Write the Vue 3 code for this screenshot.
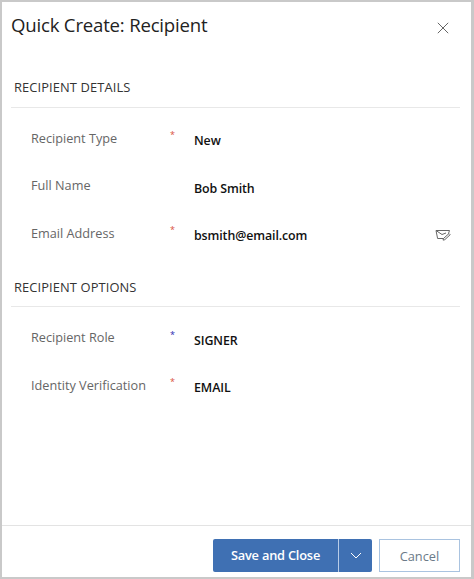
<template>
  <div class="dialog">
    <header class="dialog__header">
      <h1 class="dialog__title">Quick Create: Recipient</h1>
      <button class="dialog__close" type="button" aria-label="Close">
        <svg width="12" height="12" viewBox="0 0 12 12">
          <path d="M.8.8l10.4 10.4M11.2.8L.8 11.2" fill="none" stroke="#666" stroke-width="1" />
        </svg>
      </button>
    </header>

    <main class="dialog__body">
      <section v-for="section in sections" :key="section.title" class="section">
        <h2 class="section__title">{{ section.title }}</h2>
        <div v-for="field in section.fields" :key="field.label" class="field">
          <span class="field__label">{{ field.label }}</span>
          <span class="field__mark" :class="`field__mark--${field.mark}`">{{ field.mark ? '*' : '' }}</span>
          <span class="field__value">{{ field.value }}</span>
          <svg v-if="field.mailIcon" class="field__icon" width="16" height="12" viewBox="0 0 16 12">
            <path
              d="M1 1.5h13.5l-1 3M1 1.5l1.6 8h6M1 1.5l6 4 4-1.5M8.5 9.5l5.5-5 1.2 1.2-5.4 5-1.8.4z"
              fill="none"
              stroke="#666"
              stroke-width="1"
            />
          </svg>
        </div>
      </section>
    </main>

    <footer class="dialog__footer">
      <div class="split">
        <button class="split__main" type="button">Save and Close</button>
        <button class="split__toggle" type="button" aria-label="More">
          <svg width="12" height="7" viewBox="0 0 12 7">
            <path d="M1 1l5 5 5-5" fill="none" stroke="#fff" stroke-width="1" />
          </svg>
        </button>
      </div>
      <button class="cancel" type="button">Cancel</button>
    </footer>
  </div>
</template>

<script setup>
const sections = [
  {
    title: 'RECIPIENT DETAILS',
    fields: [
      { label: 'Recipient Type', mark: 'red', value: 'New' },
      { label: 'Full Name', mark: '', value: 'Bob Smith' },
      { label: 'Email Address', mark: 'red', value: 'bsmith@email.com', mailIcon: true },
    ],
  },
  {
    title: 'RECIPIENT OPTIONS',
    fields: [
      { label: 'Recipient Role', mark: 'blue', value: 'SIGNER' },
      { label: 'Identity Verification', mark: 'red', value: 'EMAIL' },
    ],
  },
]
</script>

<style>
html,
body {
  margin: 0;
  background: #fff;
}
</style>

<style scoped>
.dialog {
  box-sizing: border-box;
  width: 474px;
  height: 579px;
  display: flex;
  flex-direction: column;
  background: #fff;
  border: 2px solid #c9c9c9;
  border-right-width: 3px;
  font-family: "Open Sans", "Noto Sans", sans-serif;
  color: #222;
}

.dialog__header {
  display: flex;
  justify-content: space-between;
  align-items: center;
  height: 50px;
  padding: 0 22px 0 9px;
}

.dialog__title {
  margin: -6px 0 0;
  font-size: 18.6px;
  font-weight: 400;
  letter-spacing: -0.2px;
  color: #222;
}

.dialog__close {
  display: flex;
  margin-top: 2px;
  padding: 0;
  border: 0;
  background: none;
}

.dialog__body {
  flex: 1;
  padding: 21px 11px 0 9px;
}

.section__title {
  box-sizing: border-box;
  height: 35px;
  margin: 0 0 6px;
  padding: 5px 0 0 3px;
  border-bottom: 1px solid #e8e8e8;
  font-size: 12.9px;
  font-weight: 400;
  line-height: 18px;
  letter-spacing: 0.1px;
  color: #333;
}

.section {
  margin-bottom: 15px;
}

.section + .section .section__title {
  margin-bottom: 7px;
  padding-top: 6px;
}

.field {
  display: grid;
  grid-template-columns: 139px 24px 1fr 25px;
  align-items: start;
  height: 47.5px;
  padding-left: 20px;
  box-sizing: border-box;
}

.field__label {
  padding-top: 14.5px;
  font-size: 12.7px;
  line-height: 18px;
  color: #666;
}

.field__mark {
  padding-top: 14px;
  font-size: 9px;
  line-height: 14px;
}

.field__mark--red { color: #d9513c; }
.field__mark--blue { color: #2a2ab0; }

.field__value {
  padding-top: 18px;
  font-size: 12.4px;
  font-weight: 600;
  line-height: 18px;
  letter-spacing: -0.1px;
  color: #111;
}

.field__icon {
  margin-top: 20px;
}

.dialog__footer {
  display: flex;
  justify-content: flex-end;
  gap: 7px;
  height: 52px;
  padding: 13px 11px 0 0;
  box-sizing: border-box;
  border-top: 1px solid #e3e3e3;
}

.split {
  display: flex;
  height: 33px;
  border-radius: 2px;
  overflow: hidden;
}

.split__main,
.split__toggle {
  height: 33px;
  padding: 0;
  border: 0;
  background: #3f70b3;
  color: #fff;
  font-family: inherit;
}

.split__main {
  width: 125px;
  padding-bottom: 2px;
  font-size: 12.8px;
  font-weight: 600;
  letter-spacing: -0.2px;
}

.split__toggle {
  display: flex;
  align-items: center;
  justify-content: center;
  width: 34px;
  border-left: 1px solid #b9cde8;
}

.cancel {
  width: 81px;
  height: 33px;
  padding: 0;
  background: #fff;
  border: 1px solid #a9c3e0;
  color: #6b7a88;
  font-family: inherit;
  font-size: 12.8px;
}
</style>
